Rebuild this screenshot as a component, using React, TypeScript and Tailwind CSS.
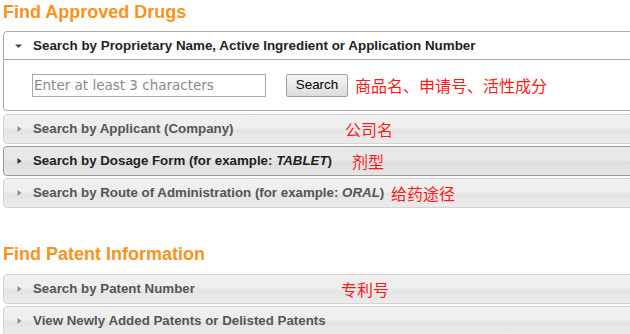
import React from "react";

type Panel = {
  label: React.ReactNode;
  note?: string;
  noteLeft?: number;
  hover?: boolean;
};

const drugPanels: Panel[] = [
  { label: "Search by Applicant (Company)", note: "公司名", noteLeft: 345 },
  {
    label: (
      <>
        Search by Dosage Form (for example: <i>TABLET</i>)
      </>
    ),
    note: "剂型",
    noteLeft: 352,
    hover: true,
  },
  {
    label: (
      <>
        Search by Route of Administration (for example: <i>ORAL</i>)
      </>
    ),
    note: "给药途径",
    noteLeft: 391,
  },
];

const patentPanels: Panel[] = [
  { label: "Search by Patent Number", note: "专利号", noteLeft: 341 },
  { label: "View Newly Added Patents or Delisted Patents" },
];

const noteFont = "[font-family:'Noto_Sans_CJK_SC','Liberation_Sans',sans-serif]";

function Arrow({ dark }: { dark?: boolean }) {
  return (
    <svg width="5" height="8" viewBox="0 0 5 8" className="shrink-0">
      <path d="M0.5 1 L4.5 4 L0.5 7 Z" fill={dark ? "#333" : "#8a8a8a"} />
    </svg>
  );
}

function Collapsed({ panel }: { panel: Panel }) {
  return (
    <div
      className={`relative flex h-[30px] w-[660px] items-center gap-[11px] rounded-l-[4px] border pl-[13px] text-[13.3px] font-bold ${
        panel.hover
          ? "border-[#9a9a9a] bg-[linear-gradient(#e8e8e8_0%,#e8e8e8_45%,#dedede_55%,#e6e6e6_100%)] text-[#222]"
          : "border-[#d3d3d3] bg-[linear-gradient(#f0f0f0_0%,#eeeeee_45%,#e5e5e5_55%,#ebebeb_100%)] text-[#555]"
      }`}
    >
      <Arrow dark={panel.hover} />
      <span>{panel.label}</span>
      {panel.note && (
        <span
          className={`absolute top-[4px] text-[16px] font-normal leading-[20px] text-[#ff1a1a] ${noteFont}`}
          style={{ left: (panel.noteLeft ?? 0) - 4 }}
        >
          {panel.note}
        </span>
      )}
    </div>
  );
}

export default function App() {
  return (
    <div className="h-[334px] w-[630px] overflow-hidden bg-white pl-[3px] [font-family:'Liberation_Sans',Arial,sans-serif]">
      <h1 className="pt-[1px] text-[18px] font-bold leading-[22px] text-[#f7941d]">Find Approved Drugs</h1>

      <div className="mt-[8px] w-[660px] rounded-l-[4px] border border-[#aaaaaa]">
        <div className="flex h-[28px] items-center gap-[11px] border-b border-[#aaaaaa] pl-[11px] pt-[2px] text-[13.4px] font-bold text-[#222]">
          <svg width="7" height="5" viewBox="0 0 7 5" className="shrink-0">
            <path d="M0 0.5 L7 0.5 L3.5 4 Z" fill="#444" />
          </svg>
          <span>Search by Proprietary Name, Active Ingredient or Application Number</span>
        </div>
        <div className="flex h-[50px] items-center pl-[28px]">
          <div className="flex h-[23px] w-[234px] items-center border border-[#a9a9a9] px-[1px] text-[13.5px] text-[#8a8a8a] [font-family:'DejaVu_Sans',Verdana,sans-serif]">
            Enter at least 3 characters
          </div>
          <button
            type="button"
            className="ml-[20px] flex h-[23px] w-[62px] items-center justify-center rounded-[2px] border border-[#a0a0a0] bg-[linear-gradient(#f5f5f5,#dcdcdc)] text-[13.4px] text-black"
          >
            Search
          </button>
          <span className={`ml-[7px] text-[16px] text-[#ff1a1a] ${noteFont}`}>商品名、申请号、活性成分</span>
        </div>
      </div>

      <div className="mt-[3px] flex flex-col gap-[2px]">
        {drugPanels.map((p, i) => (
          <Collapsed key={i} panel={p} />
        ))}
      </div>

      <h2 className="mt-[35px] text-[18px] font-bold leading-[22px] text-[#f7941d]">Find Patent Information</h2>

      <div className="mt-[9px] flex flex-col gap-[2px]">
        {patentPanels.map((p, i) => (
          <Collapsed key={i} panel={p} />
        ))}
      </div>
    </div>
  );
}
